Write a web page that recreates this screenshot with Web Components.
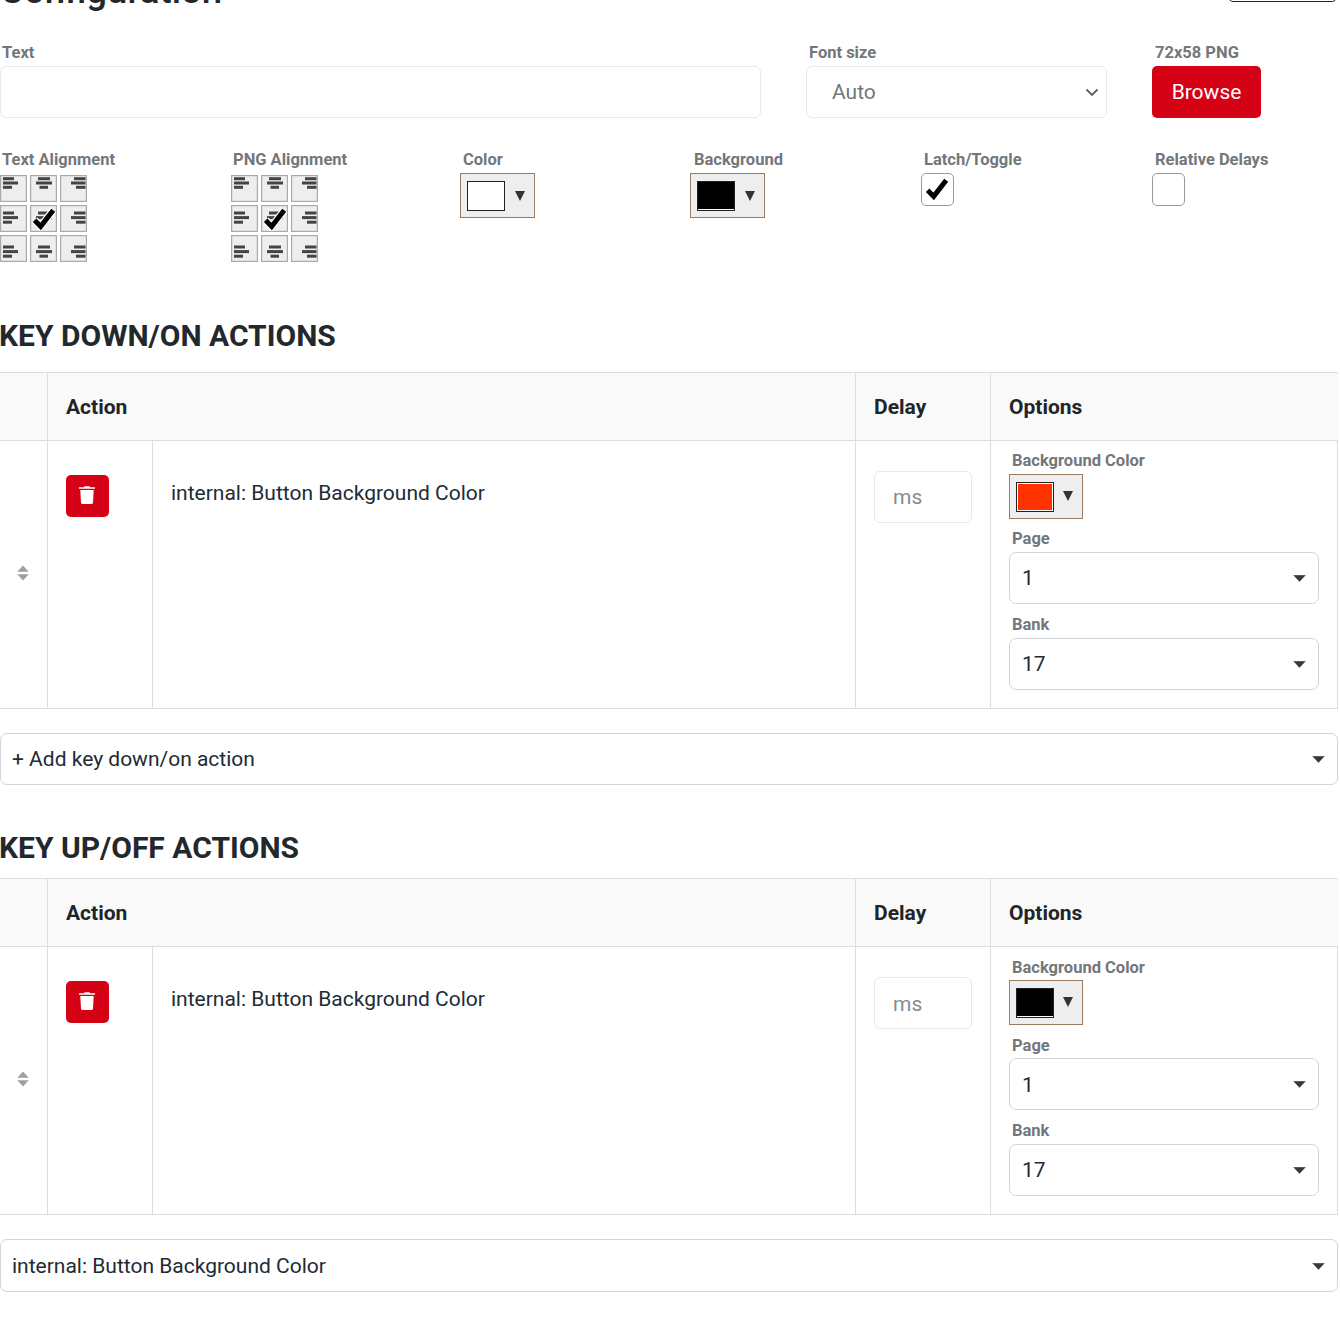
<!DOCTYPE html>
<html lang="en"><head><meta charset="utf-8"><title>Configuration</title>
<style>
html,body{margin:0;padding:0;background:#fff;overflow:hidden;height:1338px}
body{font-family:Roboto,"Liberation Sans",sans-serif;color:#212529;width:1338px}
</style></head><body>
<config-page></config-page>
<script>
const base=':host{box-sizing:border-box}*{box-sizing:border-box}';
function el(name,cls){customElements.define(name,cls)}
class Base extends HTMLElement{
  constructor(){super();this.attachShadow({mode:'open'})}
  render(h){this.shadowRoot.innerHTML=h}
  connectedCallback(){this.render(this.html())}
}
el('field-label',class extends Base{html(){return `<style>${base}:host{display:block;font:700 16.5px/20px Roboto,sans-serif;color:#73777b;padding-left:var(--lp,2px);white-space:nowrap}</style><slot></slot>`}});
el('text-box',class extends Base{html(){return `<style>${base}:host{display:flex;align-items:center;height:52px;border:1px solid #e8e8e8;border-radius:6px;background:#fff;font:400 21px/1 Roboto,sans-serif;color:#73777b;padding-left:var(--pl,18px);padding-top:var(--pt,0);position:relative}
svg{position:absolute;right:7px;top:21px}</style><slot></slot>${this.hasAttribute('chevron')?'<svg width="14" height="9" viewBox="0 0 14 9"><path d="M1.5 1.5 7 7l5.5-5.5" fill="none" stroke="#5a6068" stroke-width="1.8"/></svg>':''}`}});
el('drop-select',class extends Base{html(){return `<style>${base}:host{display:flex;align-items:center;height:52px;border:1px solid #d0d5dd;border-radius:7px;background:#fff;font:400 21px/1 Roboto,sans-serif;color:#212b36;padding-left:var(--pl,12px);padding-top:var(--pt,0);position:relative}
svg{position:absolute;right:12px;top:50%;margin-top:-3px}</style><slot></slot><svg width="13" height="7" viewBox="0 0 13 7"><path d="M.6.2h11.8L6.5 6.6z" fill="#343a40" stroke="#343a40" stroke-width=".4" stroke-linejoin="round"/></svg>`}});
el('red-button',class extends Base{html(){return `<style>${base}:host{display:inline-flex;align-items:center;justify-content:center;height:52px;width:109px;border-radius:5px;background:#d50215;color:#fff;font:400 21px/1 Roboto,sans-serif}</style><slot></slot>`}});
el('check-mark',class extends Base{html(){const h=this.hasAttribute('halo');const p='M2.600 13.200 8.700 19.400 21.200 3.200';return `<style>:host{display:block;line-height:0}</style><svg width="24" height="24" viewBox="0 0 24 24">${h?`<path d="${p}" fill="none" stroke="#fff" stroke-width="7.500"/>`:''}<path d="${p}" fill="none" stroke="#000" stroke-width="5"/></svg>`}});
el('check-box',class extends Base{html(){return `<style>${base}:host{display:flex;align-items:center;justify-content:center;width:33px;height:33px;border:1px solid #9a9a9a;border-radius:5px;background:#fff;padding:0 1px 2px 0}</style>${this.hasAttribute('checked')?'<check-mark></check-mark>':''}`}});
const L={l:[[3,14],[3,18],[3,12]],c:[[8,20],[6,22],[9.5,18]],r:[[14,25.5],[11,25.5],[16,25.5]]};
const V={t:[3.7,8,12.3],m:[8,12.6,17.2],b:[12,16.6,21.2]};
el('align-cell',class extends Base{html(){
  const a=this.getAttribute('pos')||'tl',v=V[a[0]],h=L[a[1]];
  const lines=h.map((x,i)=>`<rect x="${x[0]}" y="${v[i]-1.5}" width="${x[1]-x[0]}" height="3" fill="#444"/>`).join('');
  return `<style>${base}:host{display:block;width:27px;height:27px;position:relative}
  svg{display:block}check-mark{position:absolute;left:1.5px;top:1.5px}</style>
  <svg width="27" height="27" viewBox="0 0 27 27"><rect x=".6" y=".6" width="25.800" height="25.800" fill="#eee" stroke="#aaa" stroke-width="1.200"/>${lines}</svg>${this.hasAttribute('checked')?'<check-mark halo></check-mark>':''}`}});
el('align-grid',class extends Base{html(){
  const cells=['tl','tc','tr','ml','mc','mr','bl','bc','br'].map(p=>`<align-cell pos="${p}" ${p==='mc'?'checked':''}></align-cell>`).join('');
  return `<style>${base}:host{display:grid;grid-template-columns:repeat(3,27px);gap:3px;padding-top:2px;width:87px}</style>${cells}`}});
el('color-swatch',class extends Base{html(){
  const c=this.getAttribute('color')||'#fff',compact=this.hasAttribute('compact');
  const sh=c==='#ff3300'?'inset 0 0 0 1px #fff':c==='#000000'?'inset 0 -1px 0 #fff':'none';
  return `<style>${base}:host{display:flex;align-items:center;width:${compact?74:75}px;height:45px;border:1px solid #9b7b5e;background:#eee;padding-left:6px;gap:${compact?9:10}px}
  i{display:block;width:38px;height:30px;border:1px solid #222;background:${c};box-shadow:${sh}}
  b{display:block;width:0;height:0;border-left:5px solid transparent;border-right:5px solid transparent;border-top:10px solid #333;margin-top:${compact?-1:0}px}</style><i></i><b></b>`}});
el('trash-button',class extends Base{html(){return `<style>${base}:host{display:flex;align-items:center;justify-content:center;width:43px;height:42px;border-radius:5px;background:#d50215}svg{display:block;margin-right:1px;margin-top:-2px}</style>
  <svg width="16" height="18" viewBox="0 0 16 18"><path d="M5.600.2h4.800l.5 1.100H16v1.500H0V1.300h5.100z" fill="#fff"/><path d="M1.300 4h13.400l-.7 12.800a1.200 1.200 0 0 1-1.200 1.100H3.200a1.200 1.200 0 0 1-1.200-1.100z" fill="#fff"/></svg>`}});
el('sort-handle',class extends Base{html(){return `<style>:host{display:block;line-height:0}</style><svg width="12" height="16" viewBox="0 0 12 16"><path d="M6 .4 11.700 6.800H.3zM6 15.600.3 9.200h11.400z" fill="#9aa0a3"/></svg>`}});
el('section-title',class extends Base{html(){return `<style>${base}:host{display:block;font:700 30px/36px Roboto,sans-serif;color:#23282d;white-space:nowrap;margin-left:-1px}</style><slot></slot>`}});
el('action-table',class extends Base{html(){
  const n=this.hasAttribute('nudge');
  const [top,a,b,c,d,e]=n?[11,2,11,2,11,3]:[10,3,10,3,11,3];
  return `<style>${base}:host{display:grid;width:1338px;grid-template-columns:47px 105px 703px 135px 348px;grid-template-rows:68px 268px;border-top:1px solid #ddd;border-bottom:1px solid #ddd;border-right:1px solid #ddd;font:400 21px/30px Roboto,sans-serif;color:#212b36;height:337px}
  .h{background:#f9f9f9;border-bottom:1px solid #ddd;display:flex;align-items:center;padding:1px 0 0 18px;font:700 21px/1 Roboto,sans-serif;color:#212529}
  .c{border-left:1px solid #ddd}.s2{grid-column:span 2}
  .drag{display:flex;align-items:center;justify-content:center;padding-right:1px;padding-bottom:4px}
  .tr{padding:34px 0 0 18px}.ac{padding:37px 0 0 18px}.dl{padding:30px 0 0 18px}
  .op{padding:${top}px 19px 0 18px;display:flex;flex-direction:column}
  text-box{width:98px;--pl:18px;color:#868b90;--pt:${n?2:0}px}
  field-label{--lp:3px}
  .l1{margin-bottom:${a}px}.l2{margin-top:${b}px;margin-bottom:${c}px}.l3{margin-top:${d}px;margin-bottom:${e}px}
  .sp{--pt:${n?2:0}px}
  </style>
  <div class="h"></div><div class="h c s2">Action</div><div class="h c">Delay</div><div class="h c">Options</div>
  <div class="drag"><sort-handle></sort-handle></div>
  <div class="c tr"><trash-button></trash-button></div>
  <div class="c ac"><slot name="action"></slot></div>
  <div class="c dl"><text-box>ms</text-box></div>
  <div class="c op"><field-label class="l1">Background Color</field-label><color-swatch compact color="${this.getAttribute('color')}"></color-swatch>
    <field-label class="l2">Page</field-label><drop-select class="sp">1</drop-select>
    <field-label class="l3">Bank</field-label><drop-select>17</drop-select></div>`}});
el('config-page',class extends Base{html(){return `<style>${base}:host{display:block;width:1338px}
  .top{height:2px;position:relative}
  h1{margin:0;font:500 36.6px/44px Roboto,sans-serif;color:#23282d;position:absolute;left:0;top:-31px;white-space:nowrap}
  .topbtn{position:absolute;left:1228px;top:-38px;width:109px;height:40px;border:1.500px solid #222;border-radius:5px;background:#fff}
  .r1{display:grid;grid-template-columns:761px 301px 186px;column-gap:45px;margin-top:41px}
  .r1 field-label{margin-bottom:3px}
  .r1 .k field-label{--lp:3px}
  .r2{display:grid;grid-template-columns:231px 229px 230px 231px 231px 186px;margin-top:32px;height:112px}
  .r2 field-label{margin-bottom:3px;--lp:3px}
  .t1{margin-top:56px;margin-bottom:18px}
  .t2{margin-top:45px;margin-bottom:12px}
  .as{margin-top:24px;--pl:11px}
  .as2{height:53px;--pt:1px}
  </style>
  <div class="top"><h1>Configuration</h1><div class="topbtn"></div></div>
  <div class="r1">
    <div><field-label>Text</field-label><text-box></text-box></div>
    <div class="k"><field-label>Font size</field-label><text-box chevron style="--pl:25px">Auto</text-box></div>
    <div class="k"><field-label>72x58 PNG</field-label><red-button>Browse</red-button></div>
  </div>
  <div class="r2">
    <div><field-label style="--lp:2px">Text Alignment</field-label><align-grid></align-grid></div>
    <div><field-label style="--lp:2px">PNG Alignment</field-label><align-grid></align-grid></div>
    <div><field-label>Color</field-label><color-swatch color="#ffffff"></color-swatch></div>
    <div><field-label style="--lp:4px">Background</field-label><color-swatch color="#000000"></color-swatch></div>
    <div><field-label>Latch/Toggle</field-label><check-box checked></check-box></div>
    <div><field-label>Relative Delays</field-label><check-box></check-box></div>
  </div>
  <section-title class="t1">KEY DOWN/ON ACTIONS</section-title>
  <action-table color="#ff3300"><span slot="action">internal: Button Background Color</span></action-table>
  <drop-select class="as">+ Add key down/on action</drop-select>
  <section-title class="t2">KEY UP/OFF ACTIONS</section-title>
  <action-table color="#000000" nudge><span slot="action">internal: Button Background Color</span></action-table>
  <drop-select class="as as2">internal: Button Background Color</drop-select>`}});
</script>
</body></html>
